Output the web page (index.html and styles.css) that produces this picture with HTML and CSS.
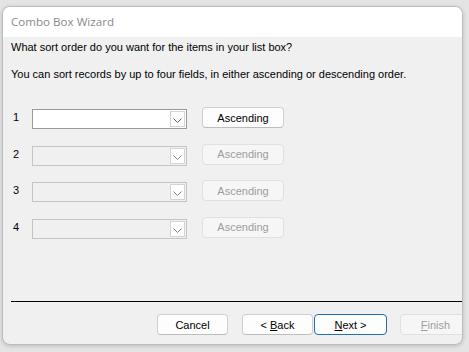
FILE: index.html
```html
<!DOCTYPE html>
<html>
<head>
<meta charset="utf-8">
<link rel="stylesheet" href="styles.css">
</head>
<body>
<div class="window">
  <div class="titlebar">Combo Box Wizard</div>
  <div class="content">
    <p class="line first">What sort order do you want for the items in your list box?</p>
    <p class="line">You can sort records by up to four fields, in either ascending or descending order.</p>
    <div class="rows">
      <div class="row">
        <span class="num">1</span>
        <div class="combo"><span class="drop"><svg width="9" height="5" viewBox="0 0 9 5"><path d="M0.5 0.5 L4.5 4.5 L8.5 0.5" fill="none" stroke="#606060" stroke-width="1"/></svg></span></div>
        <button class="btn asc">Ascending</button>
      </div>
      <div class="row">
        <span class="num">2</span>
        <div class="combo disabled"><span class="drop"><svg width="9" height="5" viewBox="0 0 9 5"><path d="M0.5 0.5 L4.5 4.5 L8.5 0.5" fill="none" stroke="#808080" stroke-width="1"/></svg></span></div>
        <button class="btn asc off">Ascending</button>
      </div>
      <div class="row">
        <span class="num">3</span>
        <div class="combo disabled"><span class="drop"><svg width="9" height="5" viewBox="0 0 9 5"><path d="M0.5 0.5 L4.5 4.5 L8.5 0.5" fill="none" stroke="#808080" stroke-width="1"/></svg></span></div>
        <button class="btn asc off">Ascending</button>
      </div>
      <div class="row">
        <span class="num">4</span>
        <div class="combo disabled"><span class="drop"><svg width="9" height="5" viewBox="0 0 9 5"><path d="M0.5 0.5 L4.5 4.5 L8.5 0.5" fill="none" stroke="#808080" stroke-width="1"/></svg></span></div>
        <button class="btn asc off">Ascending</button>
      </div>
    </div>
    <div class="sep"></div>
    <div class="footer">
      <button class="btn foot">Cancel</button>
      <button class="btn foot back">&lt; <u>B</u>ack</button>
      <button class="btn foot next"><u>N</u>ext &gt;</button>
      <button class="btn foot finish off"><u>F</u>inish</button>
    </div>
  </div>
</div>
</body>
</html>
```

FILE: styles.css
```css
html, body {
  margin: 0;
  padding: 0;
}
body {
  background: #e4e4e4;
  width: 469px;
  height: 352px;
  overflow: hidden;
  font-family: "Liberation Sans", Arial, sans-serif;
  font-size: 11px;
  color: #000;
}
.window {
  margin: 6px 0 0 2px;
  width: 459px;
  height: 337px;
  border: 1px solid #bdbdbd;
  border-radius: 8px;
  background: #f0f0f0;
  overflow: hidden;
  display: flex;
  flex-direction: column;
  box-shadow: 0 1px 4px rgba(0,0,0,0.18);
}
.titlebar {
  height: 30px;
  background: #ffffff;
  color: #8a8a8a;
  font-family: "Open Sans", "Noto Sans", sans-serif;
  font-size: 11.6px;
  line-height: 29px;
  padding-left: 8px;
  flex: none;
}
.content {
  flex: 1;
  display: flex;
  flex-direction: column;
  padding-left: 8px;
}
.line {
  margin: 0;
  height: 14px;
  line-height: 14px;
}
.line.first {
  margin-top: 3px;
  margin-bottom: 13px;
}
.rows {
  margin-top: 28px;
  display: flex;
  flex-direction: column;
  gap: 16.5px;
  flex: 1;
}
.row {
  display: flex;
  align-items: center;
  height: 20px;
}
.num {
  width: 21px;
  padding-left: 2px;
  box-sizing: border-box;
  margin-top: -4px;
}
.combo {
  width: 155px;
  height: 20px;
  box-sizing: border-box;
  border: 1px solid #9a9a9a;
  background: #fff;
  display: flex;
  justify-content: flex-end;
  align-items: stretch;
  padding: 1px;
}
.combo.disabled {
  background: #f0f0f0;
  border-color: #c4c4c4;
}
.drop {
  width: 15px;
  box-sizing: border-box;
  border: 1px solid #d4d4d4;
  background: #fff;
  display: flex;
  align-items: center;
  justify-content: center;
  padding-top: 3px;
}
.btn {
  font-family: "Liberation Sans", Arial, sans-serif;
  font-size: 11px;
  background: #fdfdfd;
  border: 1px solid #cfcfcf;
  border-bottom-color: #bdbdbd;
  border-radius: 4px;
  color: #000;
  padding: 0;
  margin: 0;
}
.btn.asc {
  width: 82px;
  height: 21px;
  margin-left: 15px;
  margin-top: -3px;
}
.btn.off {
  background: #f6f6f6;
  border-color: #e0e0e0;
  color: #9d9d9d;
}
.sep {
  height: 1px;
  background: #000;
  flex: none;
}
.footer {
  height: 42px;
  flex: none;
  display: flex;
  align-items: flex-start;
  padding-top: 12px;
  box-sizing: border-box;
  padding-left: 146px;
}
.btn.foot {
  width: 71px;
  height: 21px;
  flex: none;
}
.btn.back {
  margin-left: 14px;
}
.btn.next {
  margin-left: 1px;
  border-color: #1f6fb5;
  width: 73px;
}
.btn.finish {
  margin-left: 13px;
}
u {
  text-decoration: underline;
  text-underline-offset: 1px;
}
```
